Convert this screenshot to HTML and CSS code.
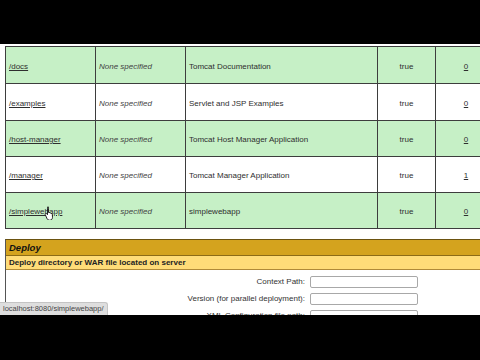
FILE: index.html
```html
<!DOCTYPE html>
<html lang="en">
<head>
    <meta charset="UTF-8" />
    <meta name="viewport" content="width=device-width, initial-scale=1.0" />
    <title>Tomcat Web Application Manager</title>
    <link rel="stylesheet" href="styles.css">
</head>
<body>
    <div class="frame">
        <div class="bar"></div>

        <div class="screen">
            <table class="apps">
                <colgroup>
                    <col class="c-path">
                    <col class="c-version">
                    <col class="c-name">
                    <col class="c-running">
                    <col class="c-sessions">
                </colgroup>
                <tr class="odd">
                    <td><a href="#">/docs</a></td>
                    <td><em>None specified</em></td>
                    <td>Tomcat Documentation</td>
                    <td class="mid">true</td>
                    <td class="mid"><a href="#">0</a></td>
                </tr>
                <tr>
                    <td><a href="#">/examples</a></td>
                    <td><em>None specified</em></td>
                    <td>Servlet and JSP Examples</td>
                    <td class="mid">true</td>
                    <td class="mid"><a href="#">0</a></td>
                </tr>
                <tr class="odd short">
                    <td><a href="#">/host-manager</a></td>
                    <td><em>None specified</em></td>
                    <td>Tomcat Host Manager Application</td>
                    <td class="mid">true</td>
                    <td class="mid"><a href="#">0</a></td>
                </tr>
                <tr class="short">
                    <td><a href="#">/manager</a></td>
                    <td><em>None specified</em></td>
                    <td>Tomcat Manager Application</td>
                    <td class="mid">true</td>
                    <td class="mid"><a href="#">1</a></td>
                </tr>
                <tr class="odd short">
                    <td><a href="#">/simplewebapp</a></td>
                    <td><em>None specified</em></td>
                    <td>simplewebapp</td>
                    <td class="mid">true</td>
                    <td class="mid"><a href="#">0</a></td>
                </tr>
            </table>

            <div class="deploy">
                <div class="deploy-title">Deploy</div>
                <div class="deploy-sub">Deploy directory or WAR file located on server</div>
                <div class="deploy-form">
                    <div class="field">
                        <label>Context Path:</label>
                        <input type="text">
                    </div>
                    <div class="field">
                        <label>Version (for parallel deployment):</label>
                        <input type="text">
                    </div>
                    <div class="field">
                        <label>XML Configuration file path:</label>
                        <input type="text">
                    </div>
                </div>
            </div>

            <!-- hover cursor and link preview sit over the page -->
            <svg class="cursor" width="11" height="14" viewBox="0 0 11 14">
                <path d="M3.5 1.2c.6 0 1 .4 1 1v4.3l.3-.1c.6-.1 1 .2 1.1.6.5-.2 1 0 1.2.5.5-.2 1.1.1 1.2.6l.2 3.2c0 1.6-1.1 2.9-2.8 2.9H5.4c-1 0-1.7-.5-2.200-1.3L1.2 8.6c-.3-.5-.1-1 .4-1.2.4-.2.8 0 1.1.3l.8 1V2.2c0-.6.4-1 1-1z" fill="#fff" stroke="#111" stroke-width=".9" stroke-linejoin="round"/>
            </svg>
            <div class="status">localhost:8080/simplewebapp/</div>
        </div>

        <div class="bar bottom"></div>
    </div>
</body>
</html>
```

FILE: styles.css
```css
body {
    margin: 0;
    background-color: #000;
    font-family: "Liberation Sans", Arial, sans-serif;
}

.frame {
    width: 480px;
    height: 360px;
    overflow: hidden;
}

.bar {
    height: 44px;
    background-color: #000;
}

    .bar.bottom {
        height: 45px;
    }

.screen {
    position: relative;
    height: 271px;
    overflow: hidden;
    background-color: #fff;
    padding-top: 2px;
    box-sizing: border-box;
}

.apps {
    margin-left: 5px;
    width: 491px;
    table-layout: fixed;
    border-collapse: collapse;
    font-size: 8px;
    color: #2e2e2e;
}

    .apps .c-path { width: 90px; }
    .apps .c-version { width: 90px; }
    .apps .c-name { width: 192px; }
    .apps .c-running { width: 58px; }
    .apps .c-sessions { width: 61px; }

    .apps tr {
        height: 37px;
        background-color: #fff;
    }

    .apps tr.short {
        height: 36px;
    }

    .apps tr.odd {
        background-color: #c6f0c6;
    }

    .apps td {
        border: 1px solid #3d3d3d;
        padding: 2px 3px 0;
        white-space: nowrap;
        overflow: hidden;
    }

    .apps .mid {
        text-align: center;
    }

    .apps a {
        color: #2e2e2e;
    }

    .apps em {
        color: #444;
    }

.deploy {
    margin-top: 10px;
    margin-left: 5px;
    width: 490px;
    border-left: 1px solid #555;
    border-top: 1px solid #6b5210;
}

.deploy-title {
    height: 15px;
    line-height: 15px;
    padding-left: 3px;
    background-color: #d4a31e;
    border-bottom: 1px solid #8d6c16;
    font-size: 9.5px;
    font-weight: bold;
    font-style: italic;
    color: #111;
}

.deploy-sub {
    height: 13px;
    line-height: 13px;
    padding-left: 3px;
    background-color: #ffdc78;
    border-bottom: 1px solid #b08a38;
    font-size: 8px;
    font-weight: bold;
    color: #222;
}

.deploy-form {
    display: flex;
    flex-direction: column;
    gap: 4px;
    padding-top: 5px;
}

.field {
    display: flex;
    align-items: center;
    gap: 5px;
    height: 13px;
}

    .field label {
        width: 299px;
        text-align: right;
        font-size: 8px;
        color: #333;
    }

    .field input {
        width: 108px;
        height: 12px;
        margin: 0;
        padding: 0;
        box-sizing: border-box;
        border: 1px solid #a8a8a8;
        border-radius: 2px;
        background-color: #fff;
    }

.cursor {
    position: absolute;
    left: 44px;
    top: 162px;
}

.status {
    position: absolute;
    left: 0;
    bottom: 0;
    height: 12px;
    line-height: 12px;
    padding: 0 4px 0 3px;
    background-color: #dedede;
    border: 1px solid #c4c4c4;
    border-left: none;
    border-bottom: none;
    border-radius: 0 3px 0 0;
    font-size: 7.5px;
    color: #444;
}
```
